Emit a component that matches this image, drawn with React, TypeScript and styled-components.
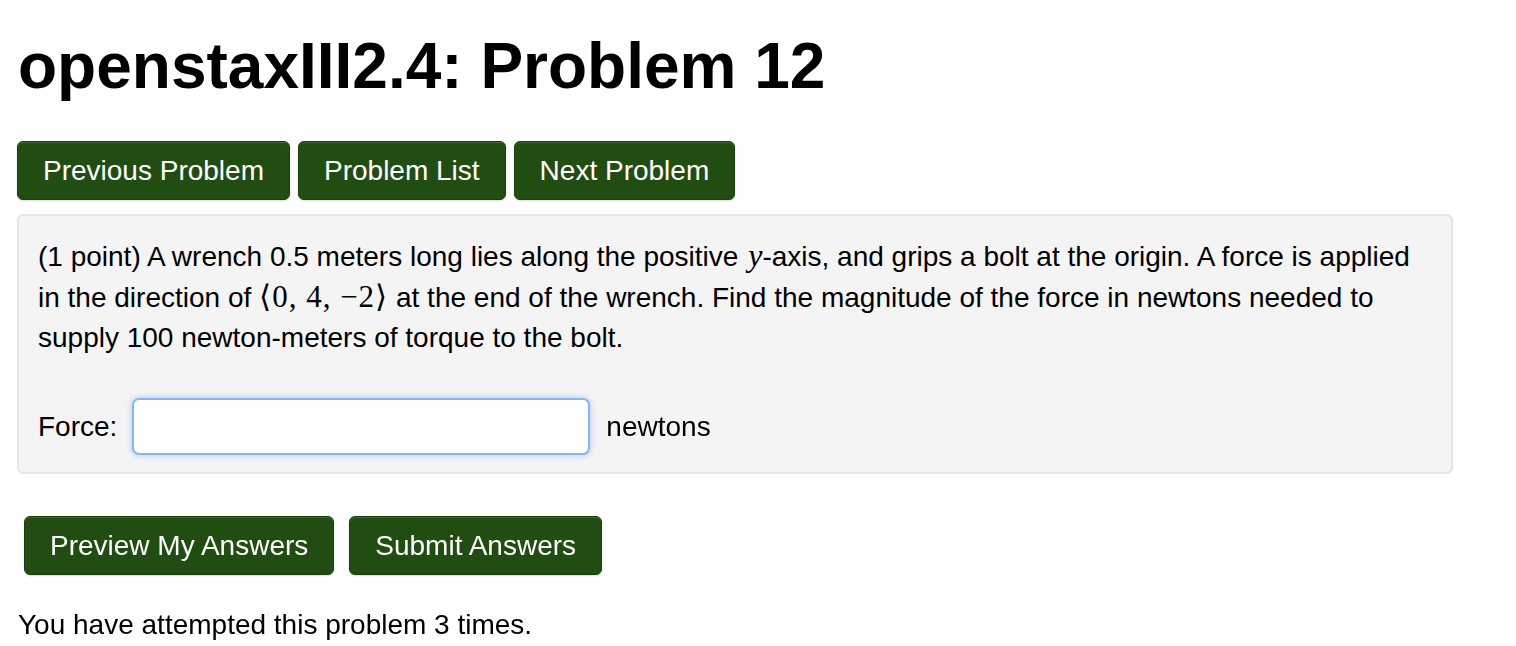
import React from "react";
import styled, { createGlobalStyle } from "styled-components";

const Global = createGlobalStyle`
  html, body {
    margin: 0;
    padding: 0;
    background: #fff;
  }
  body {
    font-family: "Liberation Sans", Arial, Helvetica, sans-serif;
    color: #000;
  }
`;

const Page = styled.main`
  padding: 14px 17px 0 17px;
  width: 1436px;
`;

const Title = styled.h1`
  margin: 0 0 0 1px;
  font-size: 64px;
  font-weight: bold;
  line-height: 104px;
`;

const NavRow = styled.div<{ $gap?: number; $top?: number; $left?: number }>`
  display: flex;
  gap: ${({ $gap }) => $gap ?? 8}px;
  margin-top: ${({ $top }) => $top ?? 0}px;
  padding-left: ${({ $left }) => $left ?? 0}px;
`;

const GreenButton = styled.button`
  height: 59px;
  padding: 0 25px;
  background: #224d12;
  color: #fff;
  border: 1px solid #1b3d0e;
  border-radius: 6px;
  box-shadow: inset 0 1px 0 rgba(255, 255, 255, 0.15), 0 1px 2px rgba(0, 0, 0, 0.15);
  font-family: "Liberation Sans", Arial, sans-serif;
  font-size: 28px;
  cursor: pointer;
`;

const Panel = styled.section`
  margin-top: 14px;
  background: #f4f4f4;
  border: 2px solid #e5e5e5;
  border-radius: 6px;
  padding: 19px 19px 17px 19px;
  font-size: 28px;
  line-height: 40px;
`;

const Statement = styled.p`
  margin: 0;
`;

const Var = styled.span`
  font-family: "Liberation Serif", "DejaVu Serif", serif;
  font-style: italic;
  font-size: 32px;
  padding-left: 2px;
`;

const MathText = styled.span`
  font-family: "Liberation Serif", "DejaVu Serif", serif;
  font-size: 31px;
  letter-spacing: 1px;
`;

const AnswerRow = styled.div`
  display: flex;
  align-items: center;
  margin-top: 40px;
`;

const AnswerInput = styled.input`
  width: 458px;
  height: 57px;
  margin: 0 16px 0 15px;
  box-sizing: border-box;
  border: 2px solid #86b5f0;
  border-radius: 7px;
  box-shadow: 0 0 6px rgba(102, 160, 233, 0.5);
  outline: none;
  font-size: 28px;
  padding: 0 12px;
  background: #fff;
  caret-color: #333;
`;

const Footer = styled.p`
  margin: 34px 0 0 1px;
  font-size: 28px;
`;

export default function App() {
  return (
    <>
      <Global />
      <Page>
        <Title>openstaxIII2.4: Problem 12</Title>
        <NavRow $top={23}>
          <GreenButton>Previous Problem</GreenButton>
          <GreenButton>Problem List</GreenButton>
          <GreenButton>Next Problem</GreenButton>
        </NavRow>
        <Panel>
          <Statement>
            (1 point) A wrench 0.5 meters long lies along the positive <Var>y</Var>-axis, and grips a
            bolt at the origin. A force is applied in the direction of{" "}
            <MathText>⟨0, 4, −2⟩</MathText> at the end of the wrench. Find the magnitude of the force in
            newtons needed to supply 100 newton-meters of torque to the bolt.
          </Statement>
          <AnswerRow>
            <span>Force:</span>
            <AnswerInput type="text" autoFocus />
            <span>newtons</span>
          </AnswerRow>
        </Panel>
        <NavRow $top={42} $left={7} $gap={15}>
          <GreenButton>Preview My Answers</GreenButton>
          <GreenButton>Submit Answers</GreenButton>
        </NavRow>
        <Footer>You have attempted this problem 3 times.</Footer>
      </Page>
    </>
  );
}
